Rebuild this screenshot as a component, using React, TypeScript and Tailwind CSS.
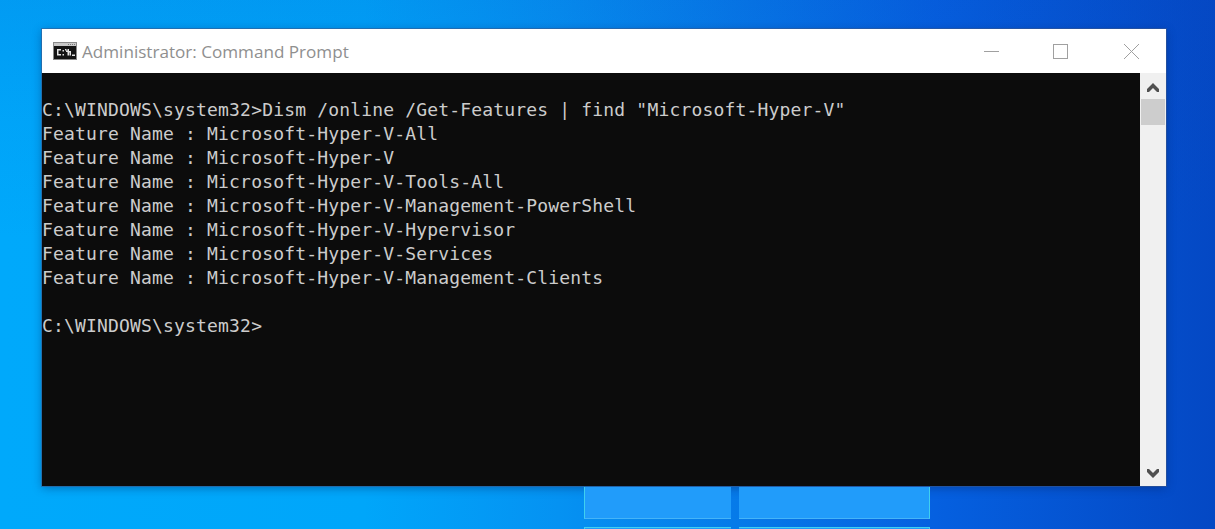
const lines = [
  "",
  'C:\\WINDOWS\\system32>Dism /online /Get-Features | find "Microsoft-Hyper-V"',
  "Feature Name : Microsoft-Hyper-V-All",
  "Feature Name : Microsoft-Hyper-V",
  "Feature Name : Microsoft-Hyper-V-Tools-All",
  "Feature Name : Microsoft-Hyper-V-Management-PowerShell",
  "Feature Name : Microsoft-Hyper-V-Hypervisor",
  "Feature Name : Microsoft-Hyper-V-Services",
  "Feature Name : Microsoft-Hyper-V-Management-Clients",
  "",
  "C:\\WINDOWS\\system32>",
];

function CmdIcon() {
  return (
    <svg width="24" height="18" viewBox="0 0 24 18" className="shrink-0">
      <rect width="24" height="18" fill="#8a8a8a" />
      <rect x="1" y="1" width="22" height="3" fill="#c8c8c8" />
      <path d="M15 2H16V3H15ZM17 2H18V3H17ZM19 2H20V3H19ZM21 2H22V3H21Z" fill="#777777" />
      <rect x="1" y="4" width="22" height="13" fill="#141414" />
      <path d="M4 7H8V8.5H5.5V12H8V13.5H4ZM9.5 8H11V9.5H9.5ZM9.5 12H11V13.5H9.5ZM12 7H13.5V8.5H14.5V7H16V9H18V13.5H16.5V10.5H16V13.5H14.5V10H13V8.5H12ZM19 12.5H22V14H19Z" fill="#e4e4e4" />
    </svg>
  );
}

function TitleBar() {
  return (
    <div className="flex h-[44px] items-center bg-white pl-[11px]">
      <CmdIcon />
      <span className="ml-[5px] pt-[2px] font-['Open_Sans','Noto_Sans',sans-serif] text-[17.1px] text-[#8f8f8f]">
        Administrator: Command Prompt
      </span>
      <div className="ml-auto flex items-center pr-[27px]">
        <div className="h-px w-[15px] bg-[#a0a0a0]" />
        <div className="ml-[54px] h-[15px] w-[15px] border border-[#a0a0a0]" />
        <svg width="15" height="15" viewBox="0 0 15 15" className="ml-[56px]">
          <path d="M0 0L15 15M15 0L0 15" stroke="#a0a0a0" strokeWidth="1" fill="none" />
        </svg>
      </div>
    </div>
  );
}

function Scrollbar() {
  return (
    <div className="flex w-[26px] shrink-0 flex-col items-stretch bg-[#f0f0f0]">
      <div className="flex h-[26px] items-center justify-center pt-[3px]">
        <svg width="12" height="9" viewBox="0 0 12 9">
          <path d="M6 0L12 6V9H10L6 5L2 9H0V6Z" fill="#505050" />
        </svg>
      </div>
      <div className="mx-px h-[26px] bg-[#cdcdcd]" />
      <div className="mt-auto flex h-[26px] items-center justify-center">
        <svg width="12" height="9" viewBox="0 0 12 9">
          <path d="M6 9L12 3V0H10L6 4L2 0H0V3Z" fill="#505050" />
        </svg>
      </div>
    </div>
  );
}

export default function App() {
  return (
    <div className="flex h-[529px] w-[1215px] flex-col overflow-hidden bg-[linear-gradient(180deg,rgba(10,70,190,0.14)_0px,rgba(10,70,190,0.05)_120px,rgba(10,70,190,0)_240px),linear-gradient(90deg,#00a9fb_0%,#00a6fa_30%,#0592f2_46%,#0678e8_62%,#0560e0_77%,#0448c4_100%)]">
      <div className="ml-[42px] mt-[29px] flex h-[457px] w-[1124px] shrink-0 flex-col shadow-[0_0_0_1px_rgba(60,90,140,0.55),0_2px_9px_rgba(0,30,90,0.4)]">
        <TitleBar />
        <div className="flex min-h-0 flex-1 bg-[#0c0c0c]">
          <pre className="min-w-0 flex-1 pt-px font-['DejaVu_Sans_Mono',monospace] text-[18px] leading-[24px] tracking-[0.17px] text-[#cccccc]">
            {lines.map((l, i) => (
              <div key={i} className="h-[24px]">
                {l}
              </div>
            ))}
          </pre>
          <Scrollbar />
        </div>
      </div>
      <div className="ml-[584px] mt-px flex gap-[8px]">
        <div className="h-[32px] w-[147px] border-b border-l border-b-[#45b4f8] border-l-[#3fd0f0] bg-[#219cfa]" />
        <div className="h-[32px] w-[191px] border-r border-b border-b-[#45b4f8] border-r-[#3fd0f0] bg-[#219cfa]" />
      </div>
      <div className="ml-[584px] mt-[8px] flex gap-[8px]">
        <div className="h-[10px] w-[147px] border-t border-l border-[#3fd0f0] bg-[#219cfa]" />
        <div className="h-[10px] w-[191px] border-t border-r border-[#3fd0f0] bg-[#219cfa]" />
      </div>
    </div>
  );
}
